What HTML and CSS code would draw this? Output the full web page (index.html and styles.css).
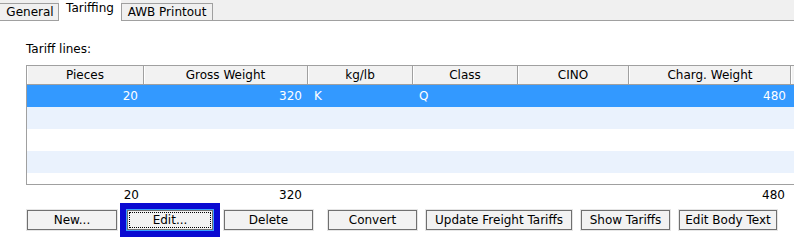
FILE: index.html
```html
<!DOCTYPE html>
<html lang="en">
<head>
    <meta charset="UTF-8">
    <title>Tariffing</title>
    <link rel="stylesheet" href="styles.css">
</head>
<body>
<div class="tabs">
    <div class="tab t-general">General</div>
    <div class="tab t-tariff active">Tariffing</div>
    <div class="tab t-awb">AWB Printout</div>
    <div class="tab-fill"></div>
</div>

<div class="panel">
    <div class="caption">Tariff lines:</div>

    <div class="grid">
        <div class="row head">
            <div class="cell c1">Pieces</div>
            <div class="cell c2">Gross Weight</div>
            <div class="cell c3">kg/lb</div>
            <div class="cell c4">Class</div>
            <div class="cell c5">CINO</div>
            <div class="cell c6">Charg. Weight</div>
            <div class="cell c7"></div>
        </div>
        <div class="row selected">
            <div class="cell c1 num">20</div>
            <div class="cell c2 num">320</div>
            <div class="cell c3">K</div>
            <div class="cell c4">Q</div>
            <div class="cell c5"></div>
            <div class="cell c6 num">480</div>
            <div class="cell c7"></div>
        </div>
        <div class="row alt"></div>
        <div class="row"></div>
        <div class="row alt"></div>
        <div class="row"></div>
    </div>

    <div class="row totals">
        <div class="cell c1 num">20</div>
        <div class="cell c2 num">320</div>
        <div class="cell c3"></div>
        <div class="cell c4"></div>
        <div class="cell c5"></div>
        <div class="cell c6 num">480</div>
    </div>

    <div class="buttons">
        <button class="btn b-new">New...</button>
        <button class="btn b-edit focused"><span>Edit...</span></button>
        <button class="btn b-delete">Delete</button>
        <button class="btn b-convert">Convert</button>
        <button class="btn b-update">Update Freight Tariffs</button>
        <button class="btn b-show">Show Tariffs</button>
        <button class="btn b-body">Edit Body Text</button>
    </div>
</div>
</body>
</html>
```

FILE: styles.css
```css
html, body {
    margin: 0;
    padding: 0;
    width: 794px;
    height: 237px;
    overflow: hidden;
    background: #ffffff;
    font-family: "DejaVu Sans", Verdana, sans-serif;
    font-size: 12px;
    color: #000;
}

/* tab strip */
.tabs { display: flex; height: 21px; background: #f0f0f0; }
.tab { box-sizing: border-box; height: 18px; margin-top: 3px; line-height: 17px; text-align: center; background: #f0f0f0; border-top: 1px solid #a0a0a0; border-bottom: 1px solid #a0a0a0; }
.t-general { width: 59px; border-right: 1px solid #a0a0a0; padding-left: 2px; }
.t-tariff { width: 62px; }
.t-awb { width: 92px; border-left: 1px solid #a0a0a0; border-right: 1px solid #a0a0a0; }
.tab.active { margin-top: 0; height: 21px; line-height: 17px; background: #ffffff; border: none; }
.tab-fill { flex: 1; border-bottom: 1px solid #a0a0a0; box-sizing: border-box; }

.panel { padding-left: 26px; }
.caption { margin-top: 21px; height: 23px; line-height: 14px; }

/* tariff grid */
.grid { width: 800px; height: 118px; border: 1px solid #a0a0a0; border-right: none; overflow: hidden; }
.row { display: flex; height: 22px; }
.row.alt { background: #eaf2fd; }
.row.selected { background: #3399ff; color: #fff; }
.row.head { height: 18px; background: #f2f2f2; border-bottom: 1px solid #a0a0a0; }
.cell { box-sizing: border-box; padding: 0 6px; line-height: 22px; white-space: nowrap; }
.head .cell { line-height: 18px; text-align: center; border-right: 1px solid #a0a0a0; box-shadow: inset 1px 0 0 #fff; }
.num { text-align: right; }
.c1 { width: 117px; }
.c2 { width: 164px; }
.c3 { width: 105px; }
.c4 { width: 105px; }
.c5 { width: 111px; }
.c6 { width: 162px; padding-right: 5px; }
.c7 { flex: 1; }

.totals { height: 20px; margin-top: 1px; }
.totals .cell { line-height: 18px; }
.totals .c1 { width: 118px; padding-right: 5px; }
.totals .c6 { padding-right: 6px; }

/* buttons */
.buttons { display: flex; margin-top: 4px; }
.btn { box-sizing: border-box; height: 20px; padding: 0; font: inherit; color: #000; background: #f2f2f2; border: 1px solid #707070; box-shadow: 0 0 0 1px #e6e6e6; }
.b-new { width: 90px; margin-left: 1px; }
.b-edit { width: 86px; margin-left: 10px; }
.b-delete { width: 89px; margin-left: 11px; }
.b-convert { width: 89px; margin-left: 15px; }
.b-update { width: 146px; margin-left: 9px; }
.b-show { width: 89px; margin-left: 9px; }
.b-body { width: 98px; margin-left: 9px; }

.focused { box-shadow: 0 0 0 1px #3aa0ff; outline: 6px solid #0a0ad2; outline-offset: 1px; padding: 1px; }
.focused span { display: block; height: 16px; line-height: 15px; box-sizing: border-box; border: 1px dotted #000; }
```
